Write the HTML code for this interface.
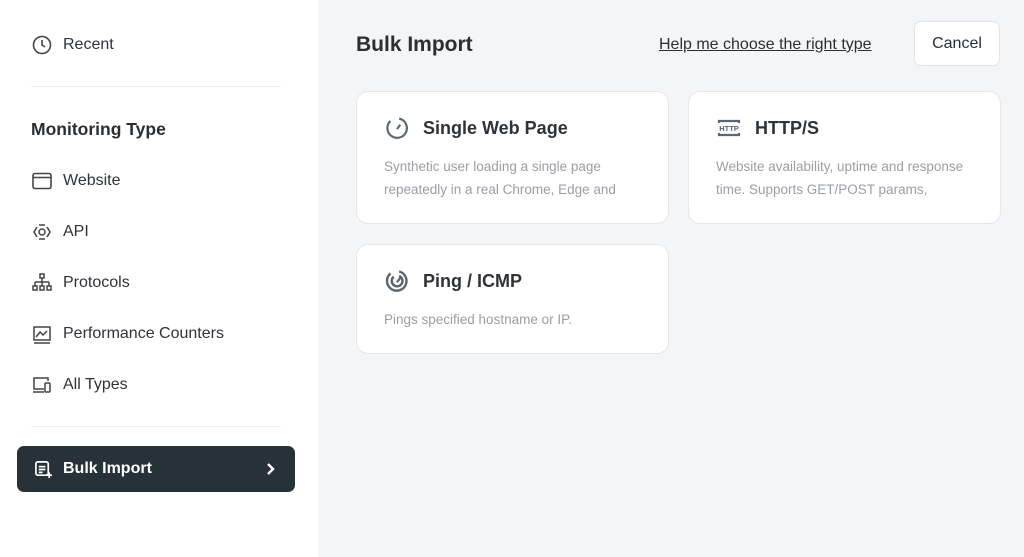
<!DOCTYPE html>
<html><head><meta charset="utf-8"><style>
*{box-sizing:border-box;margin:0;padding:0}
body{width:1024px;height:557px;overflow:hidden;font-family:"Liberation Sans",Arial,sans-serif;background:#f4f5f7;position:relative;color:#2b2f33}
.side{position:absolute;left:0;top:0;width:318px;height:557px;background:#fff}
.item{position:absolute;left:31px;display:flex;align-items:center;font-size:16px;color:#2f3337}
.item svg{width:22px;height:22px;margin-right:10px}
.hr{position:absolute;left:31px;width:250px;height:1px;background:#eceef0}
.h{position:absolute;left:31px;top:119px;font-size:17.5px;font-weight:bold;color:#2b2f33}
.bulk{position:absolute;left:17px;top:446px;width:278px;height:46px;background:#263238;border-radius:7px;color:#fff;font-size:16px;font-weight:bold;display:flex;align-items:center;padding-left:17px}
.bulk svg{margin-right:10px}
.title{position:absolute;left:356px;top:33px;font-size:21px;font-weight:bold;color:#2b2f33}
.help{position:absolute;left:659px;top:36px;font-size:16px;text-decoration:underline;color:#2b2f33}
.cancel{position:absolute;left:914px;top:21px;width:86px;height:45px;background:#fff;border:1px solid #e2e4e7;border-radius:7px;font-size:16px;display:flex;align-items:center;justify-content:center;color:#2b2f33}
.card{position:absolute;background:#fff;border:1px solid #e4e6e9;border-radius:12px;padding:0 27px}
.ct{position:absolute;left:27px;top:23px;display:flex;align-items:center;font-size:18px;font-weight:bold;color:#2f3337}
.ct svg{margin-right:13px}
.cd{position:absolute;left:27px;top:64px;font-size:13.5px;line-height:22.5px;color:#9a9ea3;width:270px}
</style></head><body>
<div class="side">
<div class="item" style="top:34px"><svg viewBox="0 0 22 22" fill="none" stroke="#444" stroke-width="1.6"><circle cx="11" cy="11" r="8.5"/><path d="M11 6v5l3 2"/></svg>Recent</div>
<div class="hr" style="top:86px"></div>
<div class="h">Monitoring Type</div>
<div class="item" style="top:170px"><svg viewBox="0 0 22 22" fill="none" stroke="#444" stroke-width="1.6"><rect x="2" y="3.5" width="18" height="15" rx="2"/><path d="M2 7.5h18"/></svg>Website</div>
<div class="item" style="top:221px"><svg viewBox="0 0 22 22" fill="none" stroke="#444" stroke-width="1.5"><circle cx="11" cy="11" r="3"/><path d="M6 6l-3 5 3 5M16 6l3 5-3 5M8 4h6M8 18h6"/></svg>API</div>
<div class="item" style="top:272px"><svg viewBox="0 0 22 22" fill="none" stroke="#444" stroke-width="1.5"><rect x="9" y="2" width="4" height="4"/><path d="M11 6v4M4 10h14M4 10v4M11 10v4M18 10v4"/><rect x="2" y="14" width="4" height="4"/><rect x="9" y="14" width="4" height="4"/><rect x="16" y="14" width="4" height="4"/></svg>Protocols</div>
<div class="item" style="top:323px"><svg viewBox="0 0 22 22" fill="none" stroke="#444" stroke-width="1.5"><path d="M3 4h16v13H3zM3 20h16M5 14l4-5 3 3 4-4"/></svg>Performance Counters</div>
<div class="item" style="top:374px"><svg viewBox="0 0 22 22" fill="none" stroke="#444" stroke-width="1.5"><path d="M13 15H3V4h14v3M2 18h11"/><rect x="14" y="9" width="5" height="9" rx="1"/></svg>All Types</div>
<div class="hr" style="top:426px"></div>
<div class="bulk"><svg width="19" height="19" viewBox="0 0 20 20" fill="none" stroke="#fff" stroke-width="1.8"><rect x="2" y="2" width="13" height="14" rx="2"/><path d="M5 7h7M5 10h7M5 13h4M16 13v6M13 16h6"/></svg>Bulk Import<svg style="position:absolute;right:20px;margin:0" width="10" height="14" viewBox="0 0 10 14" fill="none" stroke="#fff" stroke-width="2.4"><path d="M3 2l5 5-5 5"/></svg></div>
</div>
<div class="title">Bulk Import</div>
<div class="help">Help me choose the right type</div>
<div class="cancel">Cancel</div>
<div class="card" style="left:356px;top:91px;width:313px;height:133px">
<div class="ct"><svg width="26" height="26" viewBox="0 0 24 24" fill="none" stroke="#5a6770" stroke-width="2"><path d="M14 3.3A9 9 0 1 1 6 5.5"/><path d="M12 13l3-4"/></svg>Single Web Page</div>
<div class="cd">Synthetic user loading a single page repeatedly in a real Chrome, Edge and</div></div>
<div class="card" style="left:688px;top:91px;width:313px;height:133px">
<div class="ct"><svg width="26" height="26" viewBox="0 0 26 24" fill="none" stroke="#5a6770" stroke-width="2.2"><path d="M3 7V5h20v2M3 17v2h20v-2"/><text x="13" y="15" font-size="7.5" font-weight="bold" text-anchor="middle" fill="#5a6770" stroke="none" font-family="Liberation Sans">HTTP</text></svg>HTTP/S</div>
<div class="cd">Website availability, uptime and response time. Supports GET/POST params,</div></div>
<div class="card" style="left:356px;top:244px;width:313px;height:110px">
<div class="ct"><svg width="26" height="26" viewBox="0 0 24 24" fill="none" stroke="#5a6770" stroke-width="2.2"><path d="M14 3.2A9 9 0 1 1 6 5"/><path d="M14 7.3A5 5 0 1 1 9 8"/><path d="M12 13l4-5"/></svg>Ping / ICMP</div>
<div class="cd">Pings specified hostname or IP.</div></div>
</body></html>
